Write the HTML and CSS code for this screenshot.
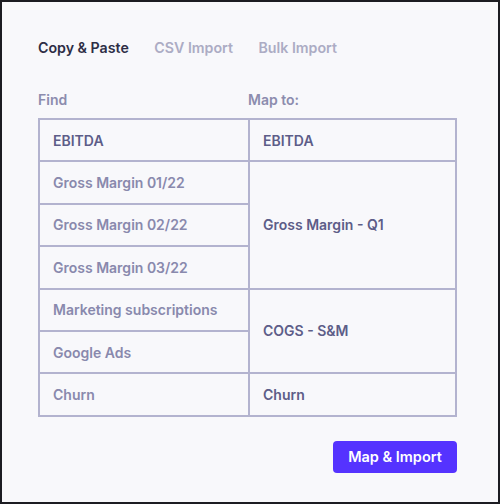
FILE: index.html
```html
<!DOCTYPE html>
<html lang="en">

<head>
    <meta charset="UTF-8">
    <meta name="viewport" content="width=device-width, initial-scale=1.0">
    <title>Import mapping</title>
    <link rel="stylesheet" href="styles.css">
</head>

<body>
    <div class="frame">
        <div class="tabs">
            <a href="javascript:;" class="tab active">Copy &amp; Paste</a>
            <a href="javascript:;" class="tab">CSV Import</a>
            <a href="javascript:;" class="tab">Bulk Import</a>
        </div>
        <div class="heads">
            <span>Find</span>
            <span>Map to:</span>
        </div>
        <table class="map">
            <tr>
                <td class="find first">EBITDA</td>
                <td class="to">EBITDA</td>
            </tr>
            <tr>
                <td class="find">Gross Margin 01/22</td>
                <td class="to" rowspan="3">Gross Margin - Q1</td>
            </tr>
            <tr>
                <td class="find">Gross Margin 02/22</td>
            </tr>
            <tr>
                <td class="find">Gross Margin 03/22</td>
            </tr>
            <tr>
                <td class="find">Marketing subscriptions</td>
                <td class="to" rowspan="2">COGS - S&amp;M</td>
            </tr>
            <tr>
                <td class="find">Google Ads</td>
            </tr>
            <tr>
                <td class="find">Churn</td>
                <td class="to">Churn</td>
            </tr>
        </table>
        <div class="actions">
            <button class="primary">Map &amp; Import</button>
        </div>
    </div>
</body>

</html>
```

FILE: styles.css
```css
body {
    margin: 0;
    font-family: Inter, "Noto Sans", sans-serif;
}

.frame {
    box-sizing: border-box;
    width: 500px;
    height: 504px;
    padding: 35px 41px 0 36px;
    background-color: #f8f8fb;
    border: 2px solid #1c1c22;
}

.tabs {
    display: flex;
    gap: 25.5px;
    height: 22px;
    line-height: 22px;
}

.tab {
    font-size: 14.2px;
    font-weight: 600;
    color: #acacc4;
    text-decoration: none;
}

.tab.active {
    color: #2d2d45;
}

.heads {
    display: grid;
    grid-template-columns: 210px 1fr;
    margin-top: 31px;
    font-size: 14px;
    font-weight: 600;
    line-height: 20px;
    color: #8c8cae;
}

.map {
    width: 419px;
    margin-top: 8px;
    border-collapse: collapse;
    table-layout: fixed;
}

.map td {
    height: 40.4px;
    padding: 0 13px;
    border: 2px solid #b3b3cf;
    font-size: 14px;
    font-weight: 600;
    vertical-align: middle;
}

.map td.find {
    width: 182px;
    color: #8989ad;
}

.map td.find.first,
.map td.to {
    color: #5d5d88;
}

.actions {
    display: flex;
    justify-content: flex-end;
    margin-top: 24px;
}

.primary {
    width: 124px;
    height: 32px;
    border: none;
    border-radius: 4px;
    background-color: #5533ff;
    color: #fff;
    font-family: inherit;
    font-size: 14.5px;
    font-weight: 600;
}
```
